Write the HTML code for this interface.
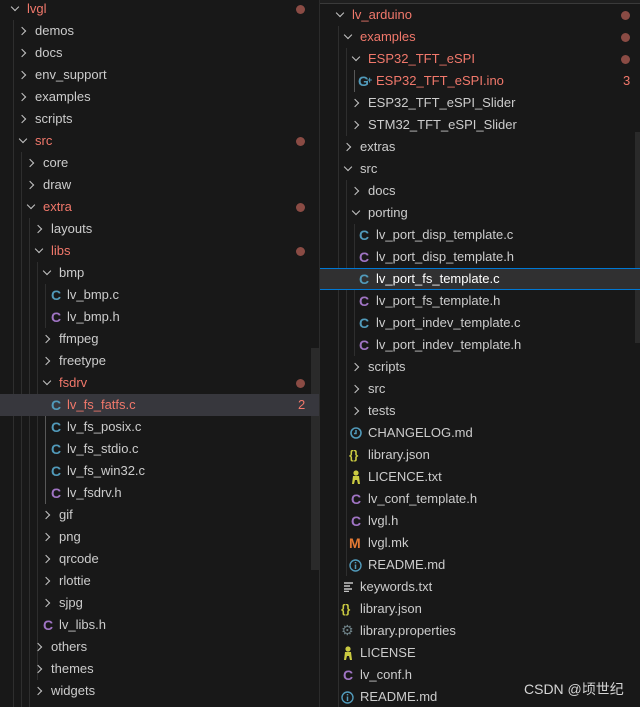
<!DOCTYPE html>
<html><head><meta charset="utf-8">
<style>
html,body{margin:0;padding:0;}
body{width:640px;height:707px;background:#181818;position:relative;overflow:hidden;font-family:"Liberation Sans","Noto Sans CJK SC",sans-serif;}
.p{position:absolute;top:0;height:707px;overflow:hidden;background:#181818}
.r{position:absolute;left:0;right:0;height:22px;line-height:22px;font-size:13px;color:#cccccc;white-space:nowrap}
.t{position:absolute;top:0}
.red{color:#f1786b}
.d,.c{position:absolute;width:5px;height:5px;border-right:1.4px solid #c5c5c5;border-bottom:1.4px solid #c5c5c5}
.d{transform:rotate(45deg);top:6px}
.c{transform:rotate(-45deg);top:8px}
.dot{position:absolute;top:7px;width:9px;height:9px;border-radius:50%;background:#8a4b44}
.n{position:absolute;top:0;color:#f1786b;font-size:13px}
.ic{position:absolute;top:0;font-weight:bold;font-size:14px}
.cc{color:#519aba}.ch{color:#a074c4}
.g{position:absolute;width:1px;background:#2e2e2e}
.sel{background:#37373d}
svg{position:absolute}
</style></head><body>

<!-- LEFT PANEL -->
<div class="p" style="left:0;width:319px">
<div class="g" style="left:13px;top:20px;height:687px"></div>
<div class="g" style="left:21px;top:152px;height:555px"></div>
<div class="g" style="left:29px;top:218px;height:489px"></div>
<div class="g" style="left:37px;top:262px;height:418px"></div>
<div class="g" style="left:45px;top:284px;height:44px"></div>
<div class="g" style="left:45px;top:394px;height:110px;background:#585858"></div>
<div style="position:absolute;left:311px;top:348px;width:8px;height:222px;background:#2a2a2a"></div>

<div class="r" style="top:-2px"><i class="d" style="left:12px"></i><span class="t red" style="left:27px">lvgl</span><i class="dot" style="left:296px"></i></div>
<div class="r" style="top:20px"><i class="c" style="left:19px"></i><span class="t" style="left:35px">demos</span></div>
<div class="r" style="top:42px"><i class="c" style="left:19px"></i><span class="t" style="left:35px">docs</span></div>
<div class="r" style="top:64px"><i class="c" style="left:19px"></i><span class="t" style="left:35px">env_support</span></div>
<div class="r" style="top:86px"><i class="c" style="left:19px"></i><span class="t" style="left:35px">examples</span></div>
<div class="r" style="top:108px"><i class="c" style="left:19px"></i><span class="t" style="left:35px">scripts</span></div>
<div class="r" style="top:130px"><i class="d" style="left:20px"></i><span class="t red" style="left:35px">src</span><i class="dot" style="left:296px"></i></div>
<div class="r" style="top:152px"><i class="c" style="left:27px"></i><span class="t" style="left:43px">core</span></div>
<div class="r" style="top:174px"><i class="c" style="left:27px"></i><span class="t" style="left:43px">draw</span></div>
<div class="r" style="top:196px"><i class="d" style="left:28px"></i><span class="t red" style="left:43px">extra</span><i class="dot" style="left:296px"></i></div>
<div class="r" style="top:218px"><i class="c" style="left:35px"></i><span class="t" style="left:51px">layouts</span></div>
<div class="r" style="top:240px"><i class="d" style="left:36px"></i><span class="t red" style="left:51px">libs</span><i class="dot" style="left:296px"></i></div>
<div class="r" style="top:262px"><i class="d" style="left:44px"></i><span class="t" style="left:59px">bmp</span></div>
<div class="r" style="top:284px"><b class="ic cc" style="left:51px">C</b><span class="t" style="left:67px">lv_bmp.c</span></div>
<div class="r" style="top:306px"><b class="ic ch" style="left:51px">C</b><span class="t" style="left:67px">lv_bmp.h</span></div>
<div class="r" style="top:328px"><i class="c" style="left:43px"></i><span class="t" style="left:59px">ffmpeg</span></div>
<div class="r" style="top:350px"><i class="c" style="left:43px"></i><span class="t" style="left:59px">freetype</span></div>
<div class="r" style="top:372px"><i class="d" style="left:44px"></i><span class="t red" style="left:59px">fsdrv</span><i class="dot" style="left:296px"></i></div>
<div class="r sel" style="top:394px;right:0"><b class="ic cc" style="left:51px">C</b><span class="t red" style="left:67px">lv_fs_fatfs.c</span><span class="n" style="left:298px">2</span></div>
<div class="r" style="top:416px"><b class="ic cc" style="left:51px">C</b><span class="t" style="left:67px">lv_fs_posix.c</span></div>
<div class="r" style="top:438px"><b class="ic cc" style="left:51px">C</b><span class="t" style="left:67px">lv_fs_stdio.c</span></div>
<div class="r" style="top:460px"><b class="ic cc" style="left:51px">C</b><span class="t" style="left:67px">lv_fs_win32.c</span></div>
<div class="r" style="top:482px"><b class="ic ch" style="left:51px">C</b><span class="t" style="left:67px">lv_fsdrv.h</span></div>
<div class="r" style="top:504px"><i class="c" style="left:43px"></i><span class="t" style="left:59px">gif</span></div>
<div class="r" style="top:526px"><i class="c" style="left:43px"></i><span class="t" style="left:59px">png</span></div>
<div class="r" style="top:548px"><i class="c" style="left:43px"></i><span class="t" style="left:59px">qrcode</span></div>
<div class="r" style="top:570px"><i class="c" style="left:43px"></i><span class="t" style="left:59px">rlottie</span></div>
<div class="r" style="top:592px"><i class="c" style="left:43px"></i><span class="t" style="left:59px">sjpg</span></div>
<div class="r" style="top:614px"><b class="ic ch" style="left:43px">C</b><span class="t" style="left:59px">lv_libs.h</span></div>
<div class="r" style="top:636px"><i class="c" style="left:35px"></i><span class="t" style="left:51px">others</span></div>
<div class="r" style="top:658px"><i class="c" style="left:35px"></i><span class="t" style="left:51px">themes</span></div>
<div class="r" style="top:680px"><i class="c" style="left:35px"></i><span class="t" style="left:51px">widgets</span></div>
</div>

<!-- RIGHT PANEL -->
<div class="p" style="left:319px;width:321px;border-left:1px solid #2b2b2b;box-sizing:border-box">
<div style="position:absolute;left:0;right:0;top:0;height:3px;background:#1f1f1f;border-bottom:1px solid #3a3a3a"></div>
<div class="g" style="left:18px;top:26px;height:681px"></div>
<div class="g" style="left:26px;top:48px;height:88px"></div>
<div class="g" style="left:26px;top:180px;height:396px"></div>
<div class="g" style="left:34px;top:70px;height:22px;background:#585858"></div>
<div class="g" style="left:34px;top:224px;height:132px"></div>
<div style="position:absolute;left:315px;top:132px;width:6px;height:211px;background:#2a2a2a"></div>

<div class="r" style="top:4px"><i class="d" style="left:17px"></i><span class="t red" style="left:32px">lv_arduino</span><i class="dot" style="left:301px"></i></div>
<div class="r" style="top:26px"><i class="d" style="left:25px"></i><span class="t red" style="left:40px">examples</span><i class="dot" style="left:301px"></i></div>
<div class="r" style="top:48px"><i class="d" style="left:33px"></i><span class="t red" style="left:48px">ESP32_TFT_eSPI</span><i class="dot" style="left:301px"></i></div>
<div class="r" style="top:70px"><b class="ic cc" style="left:38px">G</b><span style="position:absolute;left:47px;top:-1px;font-size:9px;color:#519aba;font-weight:bold">+</span><span class="t red" style="left:56px">ESP32_TFT_eSPI.ino</span><span class="n" style="left:303px">3</span></div>
<div class="r" style="top:92px"><i class="c" style="left:32px"></i><span class="t" style="left:48px">ESP32_TFT_eSPI_Slider</span></div>
<div class="r" style="top:114px"><i class="c" style="left:32px"></i><span class="t" style="left:48px">STM32_TFT_eSPI_Slider</span></div>
<div class="r" style="top:136px"><i class="c" style="left:24px"></i><span class="t" style="left:40px">extras</span></div>
<div class="r" style="top:158px"><i class="d" style="left:25px"></i><span class="t" style="left:40px">src</span></div>
<div class="r" style="top:180px"><i class="c" style="left:32px"></i><span class="t" style="left:48px">docs</span></div>
<div class="r" style="top:202px"><i class="d" style="left:33px"></i><span class="t" style="left:48px">porting</span></div>
<div class="r" style="top:224px"><b class="ic cc" style="left:39px">C</b><span class="t" style="left:56px">lv_port_disp_template.c</span></div>
<div class="r" style="top:246px"><b class="ic ch" style="left:39px">C</b><span class="t" style="left:56px">lv_port_disp_template.h</span></div>
<div class="r" style="top:268px;background:#303031;border-top:1px solid #0078d4;border-bottom:1px solid #0078d4;height:20px;line-height:20px"><b class="ic cc" style="left:39px;line-height:20px">C</b><span class="t" style="left:56px;color:#fff">lv_port_fs_template.c</span></div>
<div class="r" style="top:290px"><b class="ic ch" style="left:39px">C</b><span class="t" style="left:56px">lv_port_fs_template.h</span></div>
<div class="r" style="top:312px"><b class="ic cc" style="left:39px">C</b><span class="t" style="left:56px">lv_port_indev_template.c</span></div>
<div class="r" style="top:334px"><b class="ic ch" style="left:39px">C</b><span class="t" style="left:56px">lv_port_indev_template.h</span></div>
<div class="r" style="top:356px"><i class="c" style="left:32px"></i><span class="t" style="left:48px">scripts</span></div>
<div class="r" style="top:378px"><i class="c" style="left:32px"></i><span class="t" style="left:48px">src</span></div>
<div class="r" style="top:400px"><i class="c" style="left:32px"></i><span class="t" style="left:48px">tests</span></div>
<div class="r" style="top:422px"><svg style="left:30px;top:5px" width="12" height="12"><circle cx="6" cy="6" r="5" fill="none" stroke="#519aba" stroke-width="1.6"/><path d="M6 3v3.5h-2" stroke="#519aba" stroke-width="1.5" fill="none"/></svg><span class="t" style="left:48px">CHANGELOG.md</span></div>
<div class="r" style="top:444px"><b class="ic" style="left:29px;font-size:12px;color:#cbcb41">{}</b><span class="t" style="left:48px">library.json</span></div>
<div class="r" style="top:466px"><svg style="left:31px;top:4px" width="10" height="14"><circle cx="5" cy="3" r="2.6" fill="#cbcb41"/><path d="M2 6h6l1 8h-2l-1-4h-2l-1 4h-2z" fill="#cbcb41"/></svg><span class="t" style="left:48px">LICENCE.txt</span></div>
<div class="r" style="top:488px"><b class="ic ch" style="left:31px">C</b><span class="t" style="left:48px">lv_conf_template.h</span></div>
<div class="r" style="top:510px"><b class="ic ch" style="left:31px">C</b><span class="t" style="left:48px">lvgl.h</span></div>
<div class="r" style="top:532px"><b class="ic" style="left:29px;color:#e37933">M</b><span class="t" style="left:48px">lvgl.mk</span></div>
<div class="r" style="top:554px"><svg style="left:29px;top:5px" width="13" height="13"><circle cx="6.5" cy="6.5" r="5.5" fill="none" stroke="#519aba" stroke-width="1.4"/><path d="M6.5 5.5v4.5M6.5 3v1.4" stroke="#519aba" stroke-width="1.5"/></svg><span class="t" style="left:48px">README.md</span></div>
<div class="r" style="top:576px"><svg style="left:24px;top:6px" width="10" height="10"><path d="M0 1h9M0 4h6M0 7h8M0 9.5h5" stroke="#c5c5c5" stroke-width="1.5"/></svg><span class="t" style="left:40px">keywords.txt</span></div>
<div class="r" style="top:598px"><b class="ic" style="left:21px;font-size:12px;color:#cbcb41">{}</b><span class="t" style="left:40px">library.json</span></div>
<div class="r" style="top:620px"><span class="ic" style="left:21px;color:#6d8086;font-size:14px;font-family:'DejaVu Sans'">⚙</span><span class="t" style="left:40px">library.properties</span></div>
<div class="r" style="top:642px"><svg style="left:23px;top:4px" width="10" height="14"><circle cx="5" cy="3" r="2.6" fill="#cbcb41"/><path d="M2 6h6l1 8h-2l-1-4h-2l-1 4h-2z" fill="#cbcb41"/></svg><span class="t" style="left:40px">LICENSE</span></div>
<div class="r" style="top:664px"><b class="ic ch" style="left:23px">C</b><span class="t" style="left:40px">lv_conf.h</span></div>
<div class="r" style="top:686px"><svg style="left:21px;top:5px" width="13" height="13"><circle cx="6.5" cy="6.5" r="5.5" fill="none" stroke="#519aba" stroke-width="1.4"/><path d="M6.5 5.5v4.5M6.5 3v1.4" stroke="#519aba" stroke-width="1.5"/></svg><span class="t" style="left:40px">README.md</span></div>
</div>

<div style="position:absolute;left:524px;top:679px;font-size:14px;color:#d6d6d6;font-family:'Liberation Sans','Noto Sans CJK SC',sans-serif;white-space:nowrap">CSDN @顷世纪</div>
</body></html>
